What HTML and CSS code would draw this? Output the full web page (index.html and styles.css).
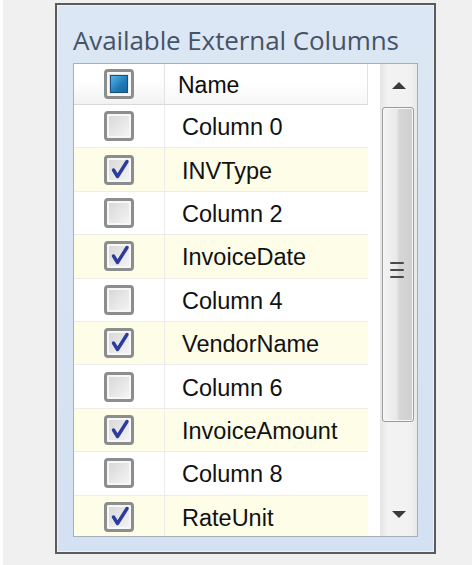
FILE: index.html
```html
<!DOCTYPE html>
<html>
<head>
<meta charset="utf-8">
<link rel="stylesheet" href="styles.css">
</head>
<body>
<div class="window">
  <div class="title">Available External Columns</div>
  <div class="listbox">
    <div class="grid">
      <div class="header">
        <div class="hcheck"><span class="cb cb-ind"><span class="ind"></span></span></div>
        <div class="hname">Name</div>
      </div>
      <div class="row"><div class="ccell"><span class="cb"></span></div><div class="ncell">Column 0</div></div>
      <div class="row checked"><div class="ccell"><span class="cb"><svg class="tick" viewBox="0 0 24 24"><path d="M6.5 12 L10.5 18.5 L20 3.5"/></svg></span></div><div class="ncell">INVType</div></div>
      <div class="row"><div class="ccell"><span class="cb"></span></div><div class="ncell">Column 2</div></div>
      <div class="row checked"><div class="ccell"><span class="cb"><svg class="tick" viewBox="0 0 24 24"><path d="M6.5 12 L10.5 18.5 L20 3.5"/></svg></span></div><div class="ncell">InvoiceDate</div></div>
      <div class="row"><div class="ccell"><span class="cb"></span></div><div class="ncell">Column 4</div></div>
      <div class="row checked"><div class="ccell"><span class="cb"><svg class="tick" viewBox="0 0 24 24"><path d="M6.5 12 L10.5 18.5 L20 3.5"/></svg></span></div><div class="ncell">VendorName</div></div>
      <div class="row"><div class="ccell"><span class="cb"></span></div><div class="ncell">Column 6</div></div>
      <div class="row checked"><div class="ccell"><span class="cb"><svg class="tick" viewBox="0 0 24 24"><path d="M6.5 12 L10.5 18.5 L20 3.5"/></svg></span></div><div class="ncell">InvoiceAmount</div></div>
      <div class="row"><div class="ccell"><span class="cb"></span></div><div class="ncell">Column 8</div></div>
      <div class="row checked"><div class="ccell"><span class="cb"><svg class="tick" viewBox="0 0 24 24"><path d="M6.5 12 L10.5 18.5 L20 3.5"/></svg></span></div><div class="ncell">RateUnit</div></div>
    </div>
    <div class="scrollbar">
      <div class="sbtn"><svg class="arrow" viewBox="0 0 14 7"><path d="M0 7 L7 0 L14 7 Z"/></svg></div>
      <div class="thumb"><div class="grip"><i></i><i></i><i></i></div></div>
      <div class="track"></div>
      <div class="sbtn"><svg class="arrow" viewBox="0 0 14 7"><path d="M0 0 L14 0 L7 7 Z"/></svg></div>
    </div>
  </div>
</div>
</body>
</html>
```

FILE: styles.css
```css
html, body {
  margin: 0;
  padding: 0;
}
body {
  width: 474px;
  height: 565px;
  box-sizing: border-box;
  background: #f0f0f0;
  border-left: 3px solid #ffffff;
  border-right: 2px solid #ffffff;
  overflow: hidden;
  padding-top: 3px;
}
.window {
  margin-left: 52px;
  width: 381px;
  height: 551px;
  box-sizing: border-box;
  border: 2px solid #5b5b5b;
  box-shadow: inset 0 0 0 1px #eaf1f9;
  background: linear-gradient(to bottom, #dce7f4, #d3e1f2);
  padding: 20px 0 0 16px;
}
.title {
  font-family: "Open Sans", "DejaVu Sans", sans-serif;
  font-size: 26px;
  line-height: 30px;
  height: 30px;
  color: #465366;
  margin-bottom: 8px;
  white-space: nowrap;
  letter-spacing: -0.1px;
}
.listbox {
  width: 345px;
  height: 474px;
  box-sizing: border-box;
  border: 1px solid #a7afba;
  background: #ffffff;
  display: flex;
  overflow: hidden;
}
.grid {
  width: 306px;
  flex: none;
  overflow: hidden;
}
.header {
  display: flex;
  height: 41px;
}
.hcheck {
  width: 91px;
  flex: none;
  box-sizing: border-box;
  border-right: 1px solid #e4e4e4;
  border-bottom: 1px solid #d8d8d8;
  background: linear-gradient(to bottom, #ffffff 40%, #f1f2f3);
  display: flex;
  align-items: center;
  justify-content: center;
}
.hname {
  width: 203px;
  flex: none;
  box-sizing: border-box;
  border-right: 1px solid #e2e2e2;
  border-bottom: 1px solid #d8d8d8;
  background: linear-gradient(to bottom, #ffffff 40%, #f6f7f8);
  font-family: "Liberation Sans", Arial, sans-serif;
  font-size: 23px;
  color: #0e0e0e;
  padding-left: 13px;
  display: flex;
  align-items: center;
  padding-top: 2px;
}
.row {
  display: flex;
  height: 43.4px;
  box-sizing: border-box;
  width: 294px;
  border-bottom: 1px solid #ececec;
  background: #ffffff;
}
.row.checked {
  background: #fefde8;
}
.ccell {
  width: 91px;
  flex: none;
  box-sizing: border-box;
  border-right: 1px solid #ececec;
  display: flex;
  align-items: center;
  justify-content: center;
}
.ncell {
  flex: 1;
  font-family: "Liberation Sans", Arial, sans-serif;
  font-size: 23.5px;
  color: #111111;
  padding-left: 17px;
  display: flex;
  align-items: center;
  padding-top: 3px;
  white-space: nowrap;
}
.cb {
  width: 30px;
  height: 30px;
  box-sizing: border-box;
  border: 3px solid #8c8d8d;
  border-radius: 4px;
  background: linear-gradient(135deg, #d6d6d6, #f6f6f6);
  box-shadow: inset 0 0 0 2px #f7f7f7;
  display: flex;
  align-items: center;
  justify-content: center;
}
.cb-ind .ind {
  width: 18px;
  height: 18px;
  box-sizing: border-box;
  border: 1px solid #1d4f7c;
  background: linear-gradient(135deg, #52b5ea, #1f79b5 60%, #17679e);
}
.tick {
  width: 24px;
  height: 24px;
}
.tick path {
  fill: none;
  stroke: #2d3c9c;
  stroke-width: 3.4;
  stroke-linecap: round;
  stroke-linejoin: round;
}
.scrollbar {
  width: 37px;
  flex: none;
  display: flex;
  flex-direction: column;
  background: linear-gradient(to right, #e4e4e4, #f2f2f2 20%, #f2f2f2 80%, #e8e8e8);
}
.sbtn {
  height: 43px;
  flex: none;
  display: flex;
  align-items: center;
  justify-content: center;
}
.arrow {
  width: 14px;
  height: 7px;
  fill: #3a3a3a;
}
.thumb {
  height: 315px;
  flex: none;
  margin: 0 3px 0 2px;
  box-sizing: border-box;
  border: 1px solid #9a9a9a;
  border-radius: 3px;
  background: linear-gradient(to right, #f4f4f4, #e9e9e9 45%, #d6d6d6 55%, #cfcfcf);
  box-shadow: inset 0 0 0 1px #f8f8f8;
  display: flex;
  align-items: center;
  justify-content: center;
}
.grip {
  display: flex;
  flex-direction: column;
  gap: 5px;
  margin-top: 11px;
  margin-right: 2px;
}
.grip i {
  display: block;
  width: 14px;
  height: 2px;
  background: #4a4a4a;
  border-radius: 1px;
}
.track {
  flex: 1;
}
```
